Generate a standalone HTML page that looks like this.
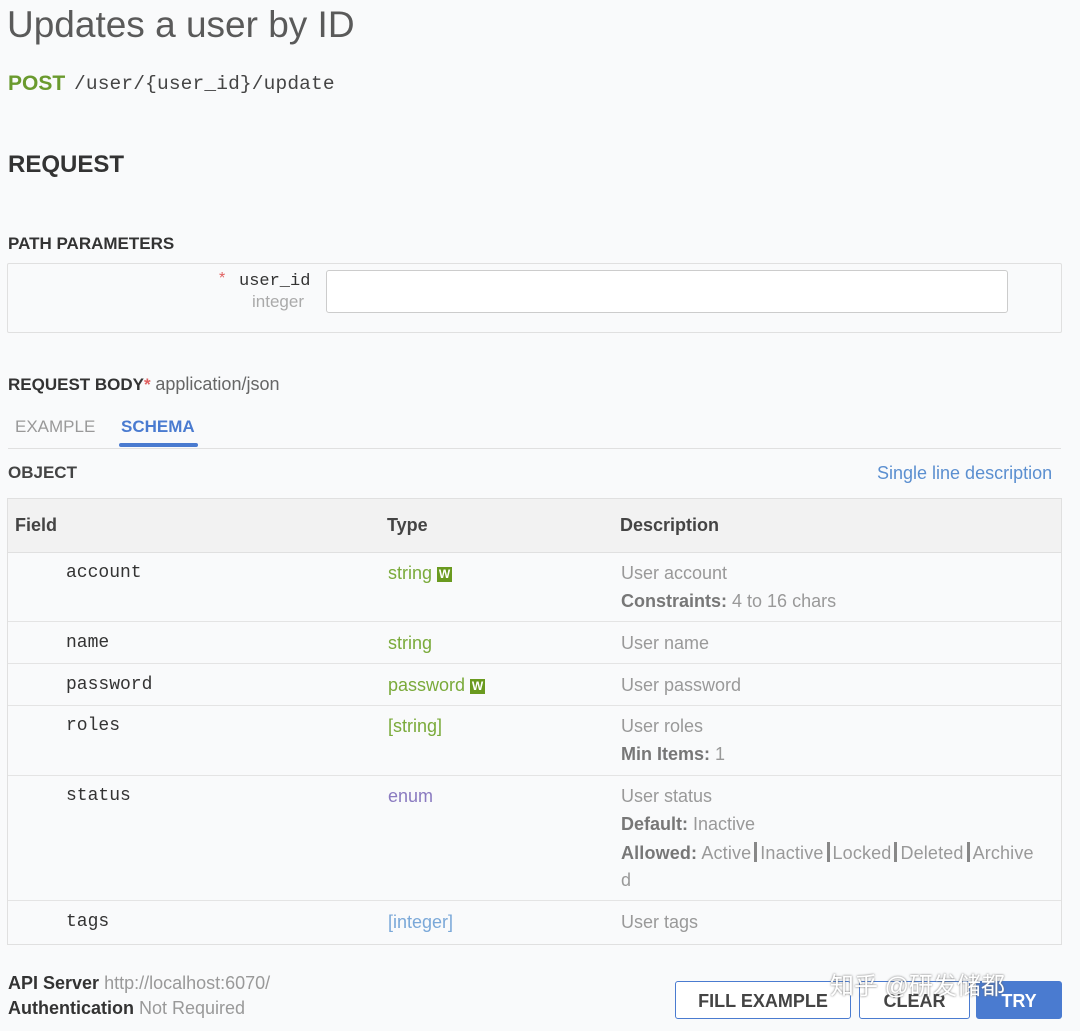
<!DOCTYPE html>
<html><head><meta charset="utf-8"><style>
body{margin:0;background:#f9fafb;width:1080px;height:1031px;overflow:hidden;font-family:"Liberation Sans","Noto Sans CJK SC",sans-serif;color:#333;position:relative}
.a{position:absolute;white-space:nowrap}
.mono{font-family:"Liberation Mono","DejaVu Sans Mono",monospace}
.g{color:#999}
.row{position:absolute;left:8px;width:1053px;border-top:1px solid #e4e4e4}
.btn{position:absolute;top:981px;height:38px;border:1.5px solid #4a7bd0;border-radius:3px;background:#fff;font-size:18px;font-weight:bold;color:#444;text-align:center;line-height:38px;box-sizing:border-box}
.w{display:inline-block;background:#6a9a1f;color:#fff;font-size:12px;font-weight:bold;width:15px;height:15px;line-height:15px;text-align:center;vertical-align:1px}
.s{display:inline-block;width:3px;height:20px;background:#888;vertical-align:-3px;margin:0 3px}
</style></head><body>
<div class="a" style="left:7px;top:4px;font-size:37px;color:#5a5a5a">Updates a user by ID</div>
<div class="a" style="left:8px;top:72px;font-size:21px;color:#6a9a2e;font-weight:bold">POST</div>
<div class="a mono" style="left:74px;top:73px;font-size:19.5px;letter-spacing:0.15px;color:#444">/user/{user_id}/update</div>
<div class="a" style="left:8px;top:151px;font-size:24px;font-weight:bold;color:#333">REQUEST</div>
<div class="a" style="left:8px;top:234px;font-size:17px;font-weight:bold;color:#333">PATH PARAMETERS</div>
<div class="a" style="left:7px;top:263px;width:1053px;height:68px;border:1px solid #e0e0e0;border-radius:2px"></div>
<div class="a" style="left:219px;top:270px;font-size:16px;color:#e06060">*</div>
<div class="a mono" style="left:239px;top:272px;font-size:17px;color:#333">user_id</div>
<div class="a g" style="left:252px;top:292px;font-size:17px;color:#aaa">integer</div>
<div class="a" style="left:326px;top:270px;width:680px;height:41px;border:1px solid #ccc;border-radius:3px;background:#fff"></div>
<div class="a" style="left:8px;top:374px;font-size:17px;font-weight:bold;color:#333">REQUEST BODY<span style="color:#e06060">*</span> <span style="font-weight:normal;color:#666;font-size:18px">application/json</span></div>
<div class="a" style="left:15px;top:417px;font-size:17px;color:#999">EXAMPLE</div>
<div class="a" style="left:121px;top:417px;font-size:17px;color:#4a7bd0;font-weight:bold">SCHEMA</div>
<div class="a" style="left:119px;top:443px;width:79px;height:4px;background:#4a7bd0;border-radius:2px"></div>
<div class="a" style="left:8px;top:448px;width:1053px;height:1px;background:#e0e0e0"></div>
<div class="a" style="left:8px;top:463px;font-size:17px;font-weight:bold;color:#444">OBJECT</div>
<div class="a" style="left:877px;top:463px;font-size:18px;color:#5b8fd0">Single line description</div>
<div class="a" style="left:7px;top:498px;width:1053px;height:445px;border:1px solid #e0e0e0"></div>
<div class="a" style="left:8px;top:499px;width:1053px;height:53px;background:#f2f2f2;border-bottom:1px solid #e0e0e0"></div>
<div class="a" style="left:15px;top:515px;font-size:18px;font-weight:bold;color:#444">Field</div>
<div class="a" style="left:387px;top:515px;font-size:18px;font-weight:bold;color:#444">Type</div>
<div class="a" style="left:620px;top:515px;font-size:18px;font-weight:bold;color:#444">Description</div>
<div class="row" style="top:621px"></div><div class="row" style="top:663px"></div><div class="row" style="top:705px"></div><div class="row" style="top:775px"></div><div class="row" style="top:900px"></div>
<div style="font-size:18px">
<div class="a mono" style="left:66px;top:563px;color:#333">account</div>
<div class="a" style="left:388px;top:563px;color:#7aaa3a">string <span class="w">W</span></div>
<div class="a g" style="left:621px;top:563px">User account</div>
<div class="a g" style="left:621px;top:591px"><b style="color:#777">Constraints:</b> 4 to 16 chars</div>
<div class="a mono" style="left:66px;top:633px">name</div>
<div class="a" style="left:388px;top:633px;color:#7aaa3a">string</div>
<div class="a g" style="left:621px;top:633px">User name</div>
<div class="a mono" style="left:66px;top:675px">password</div>
<div class="a" style="left:388px;top:675px;color:#7aaa3a">password <span class="w">W</span></div>
<div class="a g" style="left:621px;top:675px">User password</div>
<div class="a mono" style="left:66px;top:716px">roles</div>
<div class="a" style="left:388px;top:716px;color:#7aaa3a">[string]</div>
<div class="a g" style="left:621px;top:716px">User roles</div>
<div class="a g" style="left:621px;top:744px"><b style="color:#777">Min Items:</b> 1</div>
<div class="a mono" style="left:66px;top:786px">status</div>
<div class="a" style="left:388px;top:786px;color:#8a7ac0">enum</div>
<div class="a g" style="left:621px;top:786px">User status</div>
<div class="a g" style="left:621px;top:814px"><b style="color:#777">Default:</b> Inactive</div>
<div class="a g" style="left:621px;top:842px;letter-spacing:0.15px"><b style="color:#777">Allowed:</b> Active<span class="s"></span>Inactive<span class="s"></span>Locked<span class="s"></span>Deleted<span class="s"></span>Archive</div>
<div class="a g" style="left:621px;top:870px">d</div>
<div class="a mono" style="left:66px;top:912px">tags</div>
<div class="a" style="left:388px;top:912px;color:#7aa8d8">[integer]</div>
<div class="a g" style="left:621px;top:912px">User tags</div>
</div>
<div class="a" style="left:8px;top:973px;font-size:18px;font-weight:bold;color:#333">API Server <span style="font-weight:normal;color:#999">http://localhost:6070/</span></div>
<div class="a" style="left:8px;top:998px;font-size:18px;font-weight:bold;color:#333">Authentication <span style="font-weight:normal;color:#999">Not Required</span></div>
<div class="btn" style="left:675px;width:176px">FILL EXAMPLE</div>
<div class="btn" style="left:859px;width:111px">CLEAR</div>
<div class="btn" style="left:976px;width:86px;background:#4a7bd0;color:#fff">TRY</div>
<div class="a" style="left:830px;top:966px;font-size:24px;color:#fff;text-shadow:0 0 2px #666">知乎 @研发储都</div>
</body></html>
